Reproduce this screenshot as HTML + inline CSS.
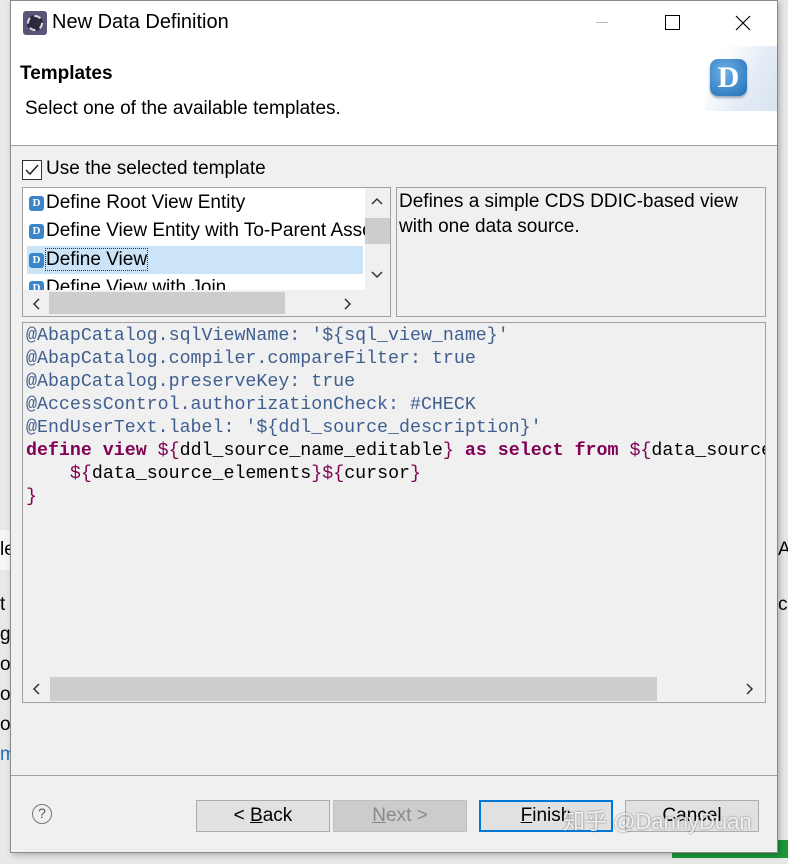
<!DOCTYPE html>
<html><head><meta charset="utf-8"><style>
*{box-sizing:border-box;margin:0;padding:0}
body{width:788px;height:864px;background:#e8e8e8;position:relative;overflow:hidden;font-family:"Liberation Sans","Noto Sans CJK SC",sans-serif;font-size:19px;color:#000}
.abs{position:absolute}
#dlg{left:10px;top:0;width:768px;height:853px;background:#f0f0f0;border:1px solid #8a8a8a;box-shadow:2px 2px 6px rgba(0,0,0,.25)}
#hdr{left:0;top:0;width:766px;height:145px;background:#fff;border-bottom:1px solid #a0a0a0}
.mono{font-family:"Liberation Mono",monospace;font-size:18.3px;line-height:23px;white-space:pre}
.an{color:#3f5f8f}.kw{color:#7f0055;font-weight:bold}.br{color:#7f0055}
.btn{top:799px;height:32px;width:134px;background:#e1e1e1;border:1px solid #adadad;text-align:center;line-height:30px;font-size:19px}
.li{position:absolute;left:4px;height:28px;line-height:28px;white-space:nowrap;padding-left:19px}
.ic{position:absolute;left:2px;top:7px;width:15px;height:15px;border-radius:3px;background:#3a86c8;color:#fff;font:bold 11px "Liberation Serif",serif;text-align:center;line-height:15px}
</style></head><body>
<div class="abs" style="left:0;top:530px;width:10px;height:40px;background:#f6f6f6;line-height:40px;overflow:hidden">le</div>
<div class="abs" style="left:0;top:590px;width:10px;line-height:30px;overflow:hidden;white-space:pre">t
g
o
o
o
<span style="color:#1a6fc0">m</span></div>
<div class="abs" style="left:778px;top:530px;width:10px;line-height:40px;overflow:hidden">Al</div>
<div class="abs" style="left:778px;top:590px;width:10px;line-height:30px;overflow:hidden">c</div>
<div class="abs" style="left:672px;top:840px;width:116px;height:18px;background:#1d9a3a"></div>
<div id="dlg" class="abs">
 <div id="hdr" class="abs">
  <div class="abs" style="left:12px;top:10px;width:24px;height:24px;background:#5a5578;border-radius:3px"><div class="abs" style="left:4px;top:4px;width:16px;height:16px;border-radius:50%;border:2px dashed #ddd;background:#2a2a40"></div></div>
  <div class="abs" style="left:41px;top:10px;font-size:20px">New Data Definition</div>
  <div class="abs" style="left:585px;top:21px;width:12px;height:1px;background:#bbb"></div>
  <div class="abs" style="left:654px;top:14px;width:15px;height:15px;border:1px solid #000"></div>
  <svg class="abs" style="left:724px;top:14px" width="16" height="16"><path d="M1 1L15 15M15 1L1 15" stroke="#000" stroke-width="1.2"/></svg>
  <div class="abs" style="left:9px;top:62px;font-weight:bold;font-size:19px">Templates</div>
  <div class="abs" style="left:14px;top:97px;font-size:19px">Select one of the available templates.</div>
  <div class="abs" style="left:694px;top:45px;width:72px;height:65px;background:linear-gradient(120deg,#fff 20%,#e4ecf6 60%,#d8e4f2)"></div>
  <div class="abs" style="left:699px;top:58px;width:37px;height:37px;border-radius:8px;background:radial-gradient(circle at 40% 35%,#6fb0e6,#1f6fb5);color:#fff;font:bold 30px 'Liberation Serif',serif;text-align:center;line-height:37px;box-shadow:0 2px 2px #9ab">D</div>
 </div>
 <div class="abs" style="left:11px;top:159px;width:20px;height:20px;border:1px solid #333;background:#fff"><svg width="18" height="18"><path d="M3 9L7 13L15 4" fill="none" stroke="#222" stroke-width="1.5"/></svg></div>
 <div class="abs" style="left:35px;top:157px">Use the selected template</div>
 <div class="abs" style="left:11px;top:186px;width:369px;height:130px;background:#fff;border:1px solid #a0a0a0;overflow:hidden">
  <div class="li" style="top:1px"><span class="ic">D</span>Define Root View Entity</div>
  <div class="li" style="top:29px"><span class="ic">D</span>Define View Entity with To-Parent Association</div>
  <div class="li" style="top:58px;width:336px;background:#cce4f7"><span class="ic">D</span><span style="outline:1px dotted #333">Define View</span></div>
  <div class="li" style="top:86px"><span class="ic">D</span>Define View with Join</div>
  <div class="abs" style="left:342px;top:0;width:25px;height:104px;background:#f0f0f0"></div>
  <div class="abs" style="left:342px;top:30px;width:25px;height:26px;background:#cdcdcd"></div>
  <svg class="abs" style="left:347px;top:8px" width="14" height="10"><path d="M2 8L7 3L12 8" fill="none" stroke="#333" stroke-width="1.5"/></svg>
  <svg class="abs" style="left:347px;top:82px" width="14" height="10"><path d="M2 2L7 7L12 2" fill="none" stroke="#333" stroke-width="1.5"/></svg>
  <div class="abs" style="left:0;top:102px;width:367px;height:26px;background:#f0f0f0"></div>
  <div class="abs" style="left:26px;top:104px;width:236px;height:22px;background:#cdcdcd"></div>
  <svg class="abs" style="left:8px;top:109px" width="10" height="14"><path d="M8 2L3 7L8 12" fill="none" stroke="#333" stroke-width="1.5"/></svg>
  <svg class="abs" style="left:320px;top:109px" width="10" height="14"><path d="M2 2L7 7L2 12" fill="none" stroke="#333" stroke-width="1.5"/></svg>
 </div>
 <div class="abs" style="left:385px;top:186px;width:370px;height:130px;border:1px solid #a0a0a0;padding:1px 2px;line-height:25px">Defines a simple CDS DDIC-based view<br>with one data source.</div>
 <div class="abs" style="left:11px;top:321px;width:744px;height:381px;border:1px solid #a0a0a0;overflow:hidden">
  <div class="mono abs" style="left:3px;top:2px"><span class="an">@AbapCatalog.sqlViewName: '${sql_view_name}'
@AbapCatalog.compiler.compareFilter: true
@AbapCatalog.preserveKey: true
@AccessControl.authorizationCheck: #CHECK
@EndUserText.label: '${ddl_source_description}'</span>
<span class="kw">define view </span><span class="br">${</span>ddl_source_name_editable<span class="br">}</span> <span class="kw">as select from </span><span class="br">${</span>data_source_name<span class="br">}</span>
    <span class="br">${</span>data_source_elements<span class="br">}${</span>cursor<span class="br">}</span>
<span class="br">}</span></div>
  <div class="abs" style="left:0;top:353px;width:742px;height:26px;background:#f0f0f0"></div>
  <div class="abs" style="left:27px;top:354px;width:607px;height:24px;background:#cdcdcd"></div>
  <svg class="abs" style="left:8px;top:359px" width="10" height="14"><path d="M8 2L3 7L8 12" fill="none" stroke="#333" stroke-width="1.5"/></svg>
  <svg class="abs" style="left:722px;top:359px" width="10" height="14"><path d="M2 2L7 7L2 12" fill="none" stroke="#333" stroke-width="1.5"/></svg>
 </div>
 <div class="abs" style="left:0;top:774px;width:766px;height:1px;background:#a0a0a0"></div>
 <div class="abs" style="left:21px;top:803px;width:20px;height:20px;border:1.5px solid #777;border-radius:50%;text-align:center;line-height:17px;font-size:14px;color:#555">?</div>
 <div class="abs btn" style="left:185px">&lt; <u>B</u>ack</div>
 <div class="abs btn" style="left:322px;background:#cccccc;border-color:#bfbfbf;color:#8a8a8a"><u>N</u>ext &gt;</div>
 <div class="abs btn" style="left:468px;border:2px solid #0078d7;line-height:28px"><u>F</u>inish</div>
 <div class="abs btn" style="left:614px">Cancel</div>
 <div class="abs" style="left:552px;top:803px;font-size:22px;color:rgba(255,255,255,.85);text-shadow:0 0 2px rgba(0,0,0,.5)">知乎 @DannyDuan</div>
</div>
</body></html>
